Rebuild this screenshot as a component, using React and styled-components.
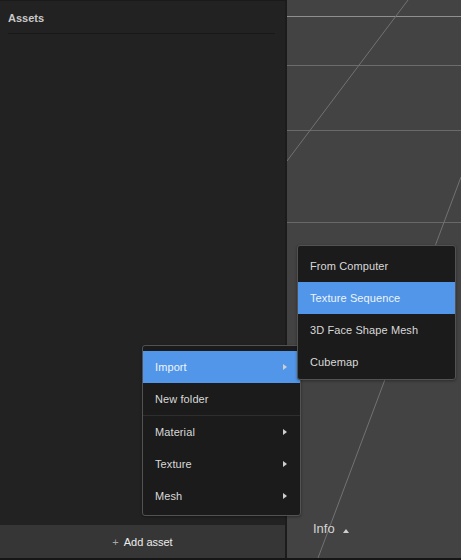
import styled, { createGlobalStyle } from "styled-components";

const GlobalStyle = createGlobalStyle`
  * { box-sizing: border-box; }
  body {
    margin: 0;
    background: #1a1a1a;
    font-family: "Liberation Sans", Arial, sans-serif;
  }
`;

const Frame = styled.div`
  position: relative;
  width: 461px;
  height: 560px;
  display: flex;
  flex-direction: column;
  overflow: hidden;
`;

const Main = styled.div`
  flex: 1;
  display: flex;
  min-height: 0;
`;

const BottomEdge = styled.div`
  height: 2px;
  background: #161616;
`;

const Sidebar = styled.div`
  width: 287px;
  display: flex;
  flex-direction: column;
  background: #222222;
  border-top: 1px solid #1a1a1a;
  border-right: 2px solid #1c1c1c;
`;

const Header = styled.div`
  margin: 0 10px 0 8px;
  padding: 10px 0 8px;
  border-bottom: 1px solid #181818;
  color: #c9c9c9;
  font-size: 11px;
  font-weight: bold;
  line-height: 14px;
`;

const AssetList = styled.div`
  flex: 1;
`;

const AddBar = styled.div`
  height: 33px;
  display: flex;
  align-items: center;
  justify-content: center;
  gap: 5px;
  background: #363636;
  color: #ececec;
  font-size: 11px;
`;

const Plus = styled.span`
  color: #a8a8a8;
  font-size: 11px;
`;

const Viewport = styled.div`
  position: relative;
  flex: 1;
  background: #434343;
`;

const Grid = styled.svg`
  display: block;
  width: 100%;
  height: 100%;
`;

const InfoToggle = styled.div`
  position: absolute;
  left: 26px;
  bottom: 21px;
  display: flex;
  align-items: center;
  gap: 8px;
  color: #d4d4d4;
  font-size: 13px;
  line-height: 16px;
`;

const UpArrow = styled.span`
  width: 0;
  height: 0;
  margin-top: 3px;
  border-left: 3px solid transparent;
  border-right: 3px solid transparent;
  border-bottom: 4px solid #cfcfcf;
`;

const Menu = styled.div`
  position: absolute;
  left: ${(p) => p.$left}px;
  top: ${(p) => p.$top}px;
  width: 159px;
  padding: ${(p) => p.$padTop}px 0 ${(p) => p.$padBottom}px;
  background: #1b1b1b;
  border: 1px solid #525252;
  border-radius: 3px;
  box-shadow: 0 1px 3px rgba(0, 0, 0, 0.35);
`;

const Item = styled.div`
  height: 32px;
  display: flex;
  align-items: center;
  justify-content: space-between;
  padding: 0 13px 0 12px;
  font-size: 11px;
  letter-spacing: 0.1px;
  color: ${(p) => (p.$active ? "#eef4fd" : "#d9d9d9")};
  background: ${(p) => (p.$active ? "#5196e8" : "transparent")};
`;

const Caret = styled.span`
  width: 0;
  height: 0;
  border-top: 3px solid transparent;
  border-bottom: 3px solid transparent;
  border-left: 4px solid #cfcfcf;
`;

const Divider = styled.div`
  height: 1px;
  background: #2e2e2e;
`;

const hLines = [
  { y: 16, c: "#8f8f8f" },
  { y: 65, c: "#6c6c6c" },
  { y: 130, c: "#6a6a6a" },
  { y: 222, c: "#686868" },
];

const mainItems = [
  { label: "Import", sub: true, active: true },
  { label: "New folder", divider: true },
  { label: "Material", sub: true },
  { label: "Texture", sub: true },
  { label: "Mesh", sub: true },
];

const importItems = ["From Computer", "Texture Sequence", "3D Face Shape Mesh", "Cubemap"];

export default function App() {
  return (
    <Frame>
      <GlobalStyle />
      <Main>
        <Sidebar>
          <Header>Assets</Header>
          <AssetList />
          <AddBar>
            <Plus>+</Plus>
            <span>Add asset</span>
          </AddBar>
        </Sidebar>
        <Viewport>
          <Grid viewBox="0 0 174 558" preserveAspectRatio="none">
            {hLines.map((l) => (
              <line key={l.y} x1="0" y1={l.y + 0.5} x2="174" y2={l.y + 0.5} stroke={l.c} strokeWidth="1" />
            ))}
            <line x1="121" y1="0" x2="0" y2="161" stroke="#727272" strokeWidth="1" />
            <line x1="174" y1="177" x2="31" y2="558" stroke="#727272" strokeWidth="1" />
          </Grid>
          <InfoToggle>
            Info
            <UpArrow />
          </InfoToggle>
        </Viewport>
      </Main>
      <BottomEdge />

      <Menu $left={142} $top={345} $padTop={5} $padBottom={3}>
        {mainItems.map((it) => (
          <div key={it.label}>
            <Item $active={it.active}>
              {it.label}
              {it.sub && <Caret />}
            </Item>
            {it.divider && <Divider />}
          </div>
        ))}
      </Menu>

      <Menu $left={297} $top={245} $padTop={4} $padBottom={1}>
        {importItems.map((label) => (
          <Item key={label} $active={label === "Texture Sequence"}>
            {label}
          </Item>
        ))}
      </Menu>
    </Frame>
  );
}
